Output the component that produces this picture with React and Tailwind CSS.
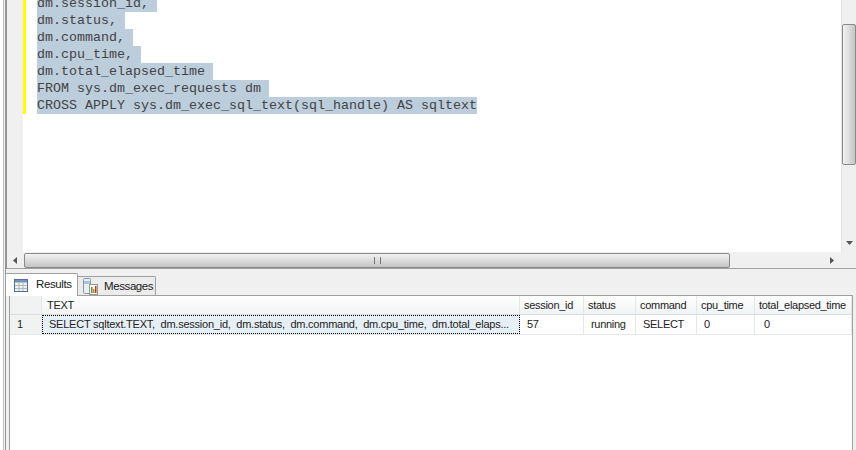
const sqlLines = [
  'dm.session_id, ',
  'dm.status, ',
  'dm.command, ',
  'dm.cpu_time, ',
  'dm.total_elapsed_time ',
  'FROM sys.dm_exec_requests dm ',
  'CROSS APPLY sys.dm_exec_sql_text(sql_handle) AS sqltext',
];

const columns = [
  { name: 'session_id', value: '57', width: 'w-[64px]', pad: 'pl-[7px]' },
  { name: 'status', value: 'running', width: 'w-[52px]', pad: 'pl-[7px]' },
  { name: 'command', value: 'SELECT', width: 'w-[61px]', pad: 'pl-[7px]' },
  { name: 'cpu_time', value: '0', width: 'w-[58px]', pad: 'pl-[7px]' },
  { name: 'total_elapsed_time', value: '0', width: 'w-[97px]', pad: 'pl-[9px]' },
];

const GridIcon = () => (
  <svg width="14" height="13" viewBox="0 0 14 13" className="shrink-0">
    <rect x="0.5" y="0.5" width="13" height="12" fill="#f6f1dc" stroke="#4f6f9f" />
    <rect x="1" y="1" width="12" height="2.5" fill="#6f93c6" />
    <path d="M1 6.5H13M1 9.5H13M5 3.5V12M9 3.5V12" stroke="#a9b8cf" fill="none" />
  </svg>
);

const MessagesIcon = () => (
  <svg width="15" height="17" viewBox="0 0 15 17" className="shrink-0">
    <rect x="0.5" y="0.5" width="7" height="15" rx="1" fill="#e8eef2" stroke="#8a98a4" />
    <rect x="1" y="3" width="6" height="3" fill="#a8c4dc" />
    <rect x="6.5" y="6.5" width="8" height="10" fill="#fbfbf4" stroke="#9a9a8c" />
    <rect x="8" y="9" width="1.5" height="6" fill="#3f9a4a" />
    <rect x="10" y="11" width="1.5" height="4" fill="#d9822b" />
    <rect x="12" y="8" width="1.5" height="7" fill="#c0392b" />
  </svg>
);

const Arrow = ({ d, className }) => (
  <svg width="7" height="7" viewBox="0 0 7 7" className={className}>
    <path d={d} fill="#555" />
  </svg>
);

export default function App() {
  return (
    <div
      className="w-[856px] h-[450px] overflow-hidden flex flex-col bg-white text-[11px] tracking-[-0.3px] text-[#222]"
      style={{ fontFamily: '"Liberation Sans", Arial, sans-serif' }}
    >
      {/* query editor */}
      <div className="h-[269px] flex shrink-0 bg-[#f0f0f0]">
        <div className="w-[3px] bg-white" />
        <div className="w-[4px] border-l border-r-2 border-l-[#c0c0c0] border-r-[#959595] bg-[#f0f0f0]" />
        <div className="flex-1 flex flex-col min-w-0 border-b border-[#a0a0a0]">
          <div className="flex-1 flex min-h-0">
            <div className="w-[16px] bg-[#f0f0f0] shrink-0" />
            <div className="flex-1 flex bg-white overflow-hidden">
              <div className="w-[3px] h-[114px] bg-[#ffff00] shrink-0" />
              <div className="pl-[11px] -mt-[5px] font-['Liberation_Mono','Courier_New',monospace] text-[13.33px] leading-[17px] tracking-normal text-[#444]">
                {sqlLines.map((line) => (
                  <div key={line} className="h-[17px] w-fit bg-[#bccddc] whitespace-pre">
                    {line}
                  </div>
                ))}
              </div>
            </div>
            {/* vertical scrollbar */}
            <div className="w-[15px] shrink-0 flex flex-col items-center bg-[#f0f0f0] border-l border-[#e4e4e4]">
              <div className="h-[24px]" />
              <div className="h-[141px] w-full rounded-[2px] border border-[#8a8a8a] bg-gradient-to-r from-[#f2f2f2] via-[#dcdcdc] to-[#c4c4c4]" />
              <div className="flex-1" />
              <Arrow d="M0 1H7L3.5 5Z" className="mb-[5px]" />
            </div>
          </div>
          {/* horizontal scrollbar */}
          <div className="h-[16px] flex items-center shrink-0 bg-[#f0f0f0]">
            <div className="w-[17px] flex justify-center">
              <Arrow d="M5 0V7L1 3.5Z" />
            </div>
            <div className="w-[706px] h-[15px] rounded-[2px] border border-[#8a8a8a] bg-gradient-to-b from-[#f2f2f2] via-[#dcdcdc] to-[#c4c4c4] flex items-center justify-center">
              <div className="w-[7px] h-[7px] border-x border-[#777]" />
            </div>
            <div className="w-[105px] flex justify-end">
              <Arrow d="M2 0V7L6 3.5Z" />
            </div>
          </div>
        </div>
      </div>

      {/* results pane */}
      <div className="flex-1 flex min-h-0 bg-[#f0f0f0]">
        <div className="w-[3px] bg-white" />
        <div className="w-[3px] border-x border-l-[#c0c0c0] border-r-[#959595]" />
        <div className="flex-1 flex flex-col min-w-0 pr-[3px]">
          <div className="h-[26px] flex items-end shrink-0 -ml-px">
            <div className="relative z-10 -mb-px h-[23px] w-[73px] flex items-center gap-[8px] pl-[8px] bg-white border border-b-0 border-[#a0a0a0] rounded-t-[2px]">
              <GridIcon />
              <span className="text-[11.5px] tracking-[-0.4px]">Results</span>
            </div>
            <div className="h-[19px] w-[78px] flex items-center gap-[6px] pl-[5px] bg-[#ececec] border border-b-0 border-l-0 border-[#a0a0a0] rounded-tr-[2px]">
              <MessagesIcon />
              <span className="text-[11.5px] tracking-[-0.4px] pt-[1px]">Messages</span>
            </div>
          </div>
          <div className="flex-1 flex flex-col ml-[3px] bg-white border border-[#a0a0a0] border-b-0 min-h-0">
            <div className="h-[19px] flex bg-gradient-to-b from-[#ffffff] to-[#f1f3f5] border-b border-[#d8dde2] shrink-0">
              <div className="w-[32px] border-r border-[#e4e6e8] bg-[#f1f3f3]" />
              <div className="w-[478px] pl-[5px] flex items-center border-r border-[#e4e6e8]">TEXT</div>
              {columns.map((c) => (
                <div key={c.name} className={`${c.width} pl-[4px] flex items-center border-r border-[#e4e6e8] whitespace-nowrap`}>
                  {c.name}
                </div>
              ))}
            </div>
            <div className="h-[20px] flex border-b border-[#e4e6e8] shrink-0">
              <div className="w-[32px] pl-[7px] flex items-center border-r border-[#e4e6e8] bg-[#f1f3f3]">1</div>
              <div className="w-[478px] pl-[6px] flex items-center border border-dotted border-black bg-[#e6eff5] whitespace-pre overflow-hidden tracking-[-0.23px]">
                SELECT sqltext.TEXT,  dm.session_id,  dm.status,  dm.command,  dm.cpu_time,  dm.total_elaps...
              </div>
              {columns.map((c) => (
                <div key={c.name} className={`${c.width} ${c.pad} flex items-center border-r border-[#e4e6e8] whitespace-nowrap`}>
                  {c.value}
                </div>
              ))}
            </div>
          </div>
        </div>
      </div>
    </div>
  );
}
